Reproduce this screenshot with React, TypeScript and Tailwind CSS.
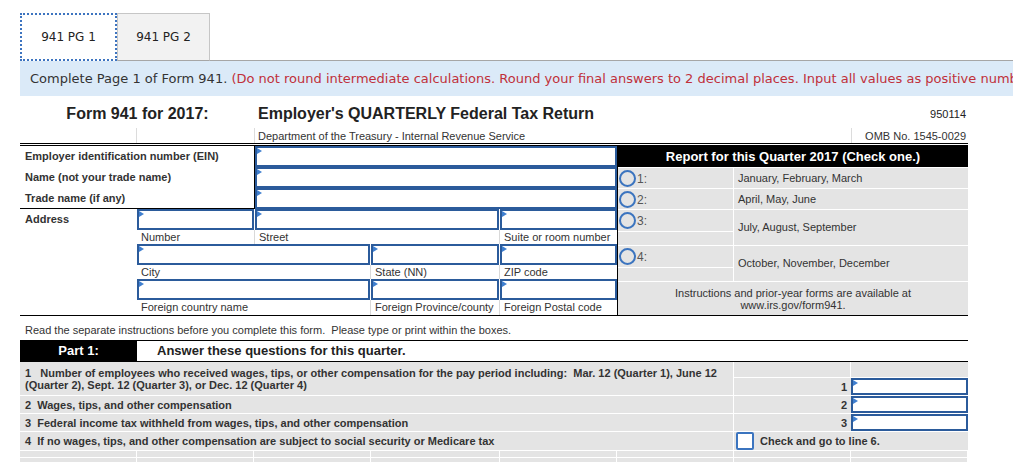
import React from "react";

function Box({ className = "" }: { className?: string }) {
  return (
    <div className={`relative h-full border-2 border-[#2b5b9b] bg-white ${className}`}>
      <span className="absolute left-0 top-0 border-y-[3px] border-l-[5px] border-y-transparent border-l-[#3f7fcf]" />
    </div>
  );
}

function Radio({ n }: { n: string }) {
  return (
    <div className="flex items-center h-[21px] pl-[1px]">
      <span className="inline-block w-[17px] h-[17px] rounded-full border-2 border-[#3b74bf]" />
      <span className="text-[12px] text-[#555] ml-[1px]">{n}:</span>
    </div>
  );
}

function Sub({ children, className = "" }: { children?: React.ReactNode; className?: string }) {
  return (
    <div className={`h-[14px] pl-[4px] text-[11px] leading-[14px] text-[#333] border-r border-[#d9d9d9] ${className}`}>
      {children}
    </div>
  );
}

export default function App() {
  return (
    <div className="w-[1013px] h-[462px] overflow-hidden bg-white">
      {/* Tabs */}
      <div className="flex pt-[13px] pl-[20px] font-['DejaVu_Sans',Verdana,sans-serif] text-[12px] text-[#222]">
        <div className="w-[97px] h-[48px] flex items-center justify-center bg-white border-2 border-dotted border-[#3d74c0]">
          941 PG 1
        </div>
        <div className="w-[93px] h-[48px] flex items-center justify-center bg-[#f2f2f2] border border-[#c6c6c6] border-b-[#a6a6a6]">
          941 PG 2
        </div>
        <div className="flex-1 border-b border-[#a6a6a6]" />
      </div>

      {/* Instructions bar */}
      <div className="ml-[20px] w-[1100px] h-[35px] flex items-center pl-[10px] bg-[#dbeaf8] whitespace-nowrap font-['DejaVu_Sans',Verdana,sans-serif] text-[13px] text-[#333]">
        Complete Page 1 of Form 941.&nbsp;
        <span className="text-[#c0303a]">
          (Do not round intermediate calculations. Round your final answers to 2 decimal places. Input all values as positive numbers.)
        </span>
      </div>

      {/* Form */}
      <div className="ml-[20px] w-[948px] mt-[4px] font-['Liberation_Sans',Arial,sans-serif] text-[#333]">
        <div className="flex h-[28px] items-center text-[#222]">
          <div className="w-[235px] text-center text-[16px] font-bold">Form 941 for 2017:</div>
          <div className="flex-1 pl-[3px] text-[16px] font-bold">Employer's QUARTERLY Federal Tax Return</div>
          <div className="pr-[2px] text-[11px]">950114</div>
        </div>
        <div className="flex h-[15px] items-end text-[11px] leading-[12px]">
          <div className="w-[117px] h-full border-r border-[#dcdcdc]" />
          <div className="w-[118px] h-full border-r border-[#dcdcdc]" />
          <div className="flex-1 pl-[3px] pb-[1px]">Department of the Treasury - Internal Revenue Service</div>
          <div className="w-[117px] h-full flex items-end justify-end border-l border-[#dcdcdc] pr-[2px] pb-[1px]">
            OMB No. 1545-0029
          </div>
        </div>
        <div className="border-t-[3px] border-double border-black" />

        <div className="flex border-b border-black">
          {/* Left side */}
          <div className="w-[597px]">
            {["Employer identification number (EIN)", "Name (not your trade name)", "Trade name (if any)"].map((l, i) => (
              <div key={l} className="flex h-[21px]">
                <div
                  className={`w-[235px] flex items-center pl-[5px] text-[11px] font-bold border-r border-black ${
                    i === 2 ? "border-b" : ""
                  }`}
                >
                  {l}
                </div>
                <div className="flex-1">
                  <Box />
                </div>
              </div>
            ))}
            <div className="flex">
              <div className="w-[117px] pl-[5px] pt-[2px] text-[11px] font-bold">Address</div>
              <div className="grid grid-cols-[118px_116px_129px_117px]">
                <div className="h-[21px] pr-[1px]"><Box /></div>
                <div className="h-[21px] col-span-2 pr-[1px]"><Box /></div>
                <div className="h-[21px]"><Box /></div>
                <Sub>Number</Sub>
                <Sub className="col-span-2">Street</Sub>
                <Sub className="border-r-0">Suite or room number</Sub>

                <div className="h-[21px] col-span-2 pr-[1px]"><Box /></div>
                <div className="h-[21px] pr-[1px]"><Box /></div>
                <div className="h-[21px]"><Box /></div>
                <Sub className="col-span-2">City</Sub>
                <Sub>State (NN)</Sub>
                <Sub className="border-r-0">ZIP code</Sub>

                <div className="h-[21px] col-span-2 pr-[1px]"><Box /></div>
                <div className="h-[21px] pr-[1px]"><Box /></div>
                <div className="h-[21px]"><Box /></div>
                <Sub className="col-span-2 h-[15px] leading-[15px]">Foreign country name</Sub>
                <Sub className="h-[15px] leading-[15px]">Foreign Province/county</Sub>
                <Sub className="h-[15px] leading-[15px] border-r-0">Foreign Postal code</Sub>
              </div>
            </div>
          </div>

          {/* Right side */}
          <div className="w-[351px] border-l border-black flex flex-col bg-[#e4e4e4] text-[11px]">
            <div className="h-[21px] bg-black text-white text-[13px] font-bold flex items-center justify-center">
              Report for this Quarter 2017 (Check one.)
            </div>
            <div className="flex h-[21px] border-t border-white">
              <div className="w-[116px] border-r border-white"><Radio n="1" /></div>
              <div className="flex-1 flex items-center pl-[4px]">January, February, March</div>
            </div>
            <div className="flex h-[21px] border-t border-white">
              <div className="w-[116px] border-r border-white"><Radio n="2" /></div>
              <div className="flex-1 flex items-center pl-[4px]">April, May, June</div>
            </div>
            <div className="flex h-[36px] border-t border-white">
              <div className="w-[116px] border-r border-white flex flex-col">
                <Radio n="3" />
                <div className="flex-1 border-t border-white" />
              </div>
              <div className="flex-1 flex items-center pl-[4px]">July, August, September</div>
            </div>
            <div className="flex h-[36px] border-t border-white">
              <div className="w-[116px] border-r border-white flex flex-col">
                <Radio n="4" />
                <div className="flex-1 border-t border-white" />
              </div>
              <div className="flex-1 flex items-center pl-[4px]">October, November, December</div>
            </div>
            <div className="flex-1 border-t border-white flex flex-col items-center justify-center leading-[12px] text-[11px]">
              <div>Instructions and prior-year forms are available at</div>
              <div>www.irs.gov/form941.</div>
            </div>
          </div>
        </div>

        <div className="h-[25px] flex items-end pb-[2px] pl-[5px] text-[11px] border-b border-black">
          Read the separate instructions before you complete this form.&nbsp; Please type or print within the boxes.
        </div>

        {/* Part 1 */}
        <div className="flex h-[21px] border-b border-black">
          <div className="w-[117px] bg-black text-white text-[13px] font-bold flex items-center justify-center">Part 1:</div>
          <div className="pl-[20px] text-[13px] font-bold flex items-center text-[#222]">Answer these questions for this quarter.</div>
        </div>

        <div className="bg-[#e4e4e4] text-[11px] font-bold">
          <div className="flex h-[34px] border-b border-white">
            <div className="w-[714px] border-r border-white pl-[5px] pt-[5px] leading-[12px]">
              1&nbsp;&nbsp; Number of employees who received wages, tips, or other compensation for the pay period including:&nbsp; Mar. 12 (Quarter 1), June 12
              <br />
              (Quarter 2), Sept. 12 (Quarter 3), or Dec. 12 (Quarter 4)
            </div>
            <div className="flex-1 flex flex-col">
              <div className="h-[16px] flex border-b border-white">
                <div className="w-[117px] border-r border-white" />
                <div className="flex-1" />
              </div>
              <div className="flex-1 flex">
                <div className="w-[117px] flex items-center justify-end pr-[4px] pt-[1px]">1</div>
                <div className="flex-1"><Box /></div>
              </div>
            </div>
          </div>
          {[
            ["2", "Wages, tips, and other compensation"],
            ["3", "Federal income tax withheld from wages, tips, and other compensation"],
          ].map(([n, t]) => (
            <div key={n} className="flex h-[18px] border-b border-white">
              <div className="w-[714px] border-r border-white pl-[5px] pt-[1px] flex items-center">
                {n}&nbsp; {t}
              </div>
              <div className="w-[117px] flex items-center justify-end pr-[4px] pt-[1px]">{n}</div>
              <div className="flex-1"><Box /></div>
            </div>
          ))}
          <div className="flex h-[19px] border-b border-white">
            <div className="w-[714px] border-r border-white pl-[5px] pt-[1px] flex items-center">
              4&nbsp; If no wages, tips, and other compensation are subject to social security or Medicare tax
            </div>
            <div className="flex-1 flex items-center pl-[2px]">
              <span className="inline-block w-[18px] h-[18px] rounded-[2px] border-2 border-[#3b74bf] bg-white" />
              <span className="ml-[6px] pt-[1px]">Check and go to line 6.</span>
            </div>
          </div>
          {[7, 10].map((h) => (
            <div key={h} className={`flex border-b border-white ${h === 7 ? "h-[7px]" : "h-[10px]"}`}>
              {[117, 117, 117, 129, 117, 117, 117, 117].map((w, i) => (
                <div key={i} className="border-r border-white" style={{ width: w }} />
              ))}
            </div>
          ))}
        </div>
      </div>
    </div>
  );
}
